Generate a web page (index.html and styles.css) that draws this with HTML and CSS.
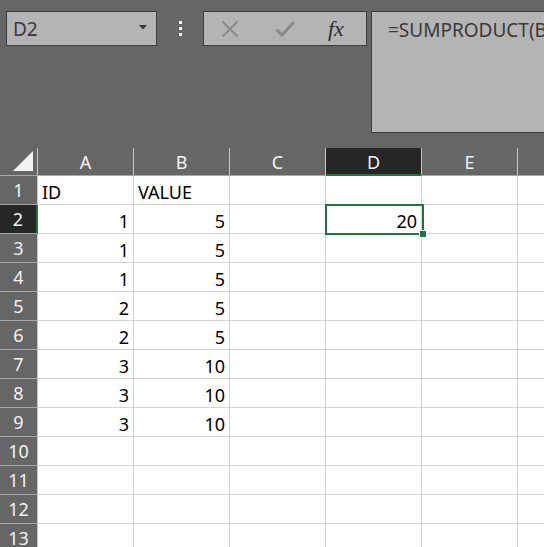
FILE: index.html
```html
<!DOCTYPE html>
<html>
<head>
<meta charset="utf-8">
<link rel="stylesheet" href="styles.css">
</head>
<body>
<div class="app">
  <div class="toolbar">
    <div class="namebox">
      <span class="name">D2</span>
      <svg class="caret" width="8" height="5" viewBox="0 0 8 5"><path d="M0 0H8L4 4.5Z" fill="#3a3a3a"/></svg>
    </div>
    <div class="dots"><i></i><i></i><i></i></div>
    <div class="buttons">
      <svg class="ico" width="18" height="18" viewBox="0 0 18 18"><path d="M1.5 1.5L16.5 16.5M16.5 1.5L1.5 16.5" stroke="#8a8a8a" stroke-width="1.8" fill="none"/></svg>
      <svg class="ico" width="20" height="18" viewBox="0 0 20 18"><path d="M1.5 9.5L7 15L18.5 2.5" stroke="#8a8a8a" stroke-width="3" fill="none"/></svg>
      <span class="fx">fx</span>
    </div>
    <div class="formula">=SUMPRODUCT(B</div>
  </div>
  <div class="sheet">
    <div class="corner"><svg width="22" height="22" viewBox="0 0 22 22"><path d="M21 1V21H1Z" fill="#f2f2f2"/></svg></div>
    <div class="ch">A</div><div class="ch">B</div><div class="ch">C</div><div class="ch sel">D</div><div class="ch">E</div><div class="ch"></div>

    <div class="rh">1</div><div class="c">ID</div><div class="c">VALUE</div><div class="c"></div><div class="c"></div><div class="c"></div><div class="c"></div>
    <div class="rh sel">2</div><div class="c n">1</div><div class="c n">5</div><div class="c"></div><div class="c n">20</div><div class="c"></div><div class="c"></div>
    <div class="rh">3</div><div class="c n">1</div><div class="c n">5</div><div class="c"></div><div class="c"></div><div class="c"></div><div class="c"></div>
    <div class="rh">4</div><div class="c n">1</div><div class="c n">5</div><div class="c"></div><div class="c"></div><div class="c"></div><div class="c"></div>
    <div class="rh">5</div><div class="c n">2</div><div class="c n">5</div><div class="c"></div><div class="c"></div><div class="c"></div><div class="c"></div>
    <div class="rh">6</div><div class="c n">2</div><div class="c n">5</div><div class="c"></div><div class="c"></div><div class="c"></div><div class="c"></div>
    <div class="rh">7</div><div class="c n">3</div><div class="c n">10</div><div class="c"></div><div class="c"></div><div class="c"></div><div class="c"></div>
    <div class="rh">8</div><div class="c n">3</div><div class="c n">10</div><div class="c"></div><div class="c"></div><div class="c"></div><div class="c"></div>
    <div class="rh">9</div><div class="c n">3</div><div class="c n">10</div><div class="c"></div><div class="c"></div><div class="c"></div><div class="c"></div>
    <div class="rh">10</div><div class="c"></div><div class="c"></div><div class="c"></div><div class="c"></div><div class="c"></div><div class="c"></div>
    <div class="rh">11</div><div class="c"></div><div class="c"></div><div class="c"></div><div class="c"></div><div class="c"></div><div class="c"></div>
    <div class="rh">12</div><div class="c"></div><div class="c"></div><div class="c"></div><div class="c"></div><div class="c"></div><div class="c"></div>
    <div class="rh">13</div><div class="c"></div><div class="c"></div><div class="c"></div><div class="c"></div><div class="c"></div><div class="c"></div>
    <div class="selbox"><span class="handle"></span></div>
  </div>
</div>
</body>
</html>
```
FILE: styles.css
```css
html, body {
  margin: 0;
  padding: 0;
  background: #666666;
  overflow: hidden;
}
.app {
  width: 544px;
  height: 547px;
  overflow: hidden;
  font-family: "Noto Sans", "Open Sans", sans-serif;
}
.toolbar {
  height: 148px;
  display: flex;
  align-items: flex-start;
  padding: 11px 0 0 6px;
  box-sizing: border-box;
  background: #666666;
}
.namebox {
  width: 151px;
  height: 35px;
  box-sizing: border-box;
  border: 1px solid #3d3d3d;
  background: #b4b4b4;
  display: flex;
  align-items: center;
  justify-content: space-between;
  padding: 0 9px 0 6px;
}
.name {
  font-size: 19px;
  color: #3a3a3a;
  line-height: 1;
  margin-top: 1px;
}
.caret { margin-top: -2px; }
.dots {
  width: 46px;
  height: 35px;
  display: flex;
  flex-direction: column;
  align-items: center;
  justify-content: center;
  gap: 3px;
}
.dots i {
  display: block;
  width: 3px;
  height: 3px;
  background: #f4f4f4;
}
.buttons {
  width: 164px;
  height: 35px;
  box-sizing: border-box;
  border: 1px solid #3d3d3d;
  background: #b4b4b4;
  display: flex;
  align-items: center;
  padding-left: 17px;
  gap: 36px;
}
.fx {
  font-family: "Liberation Serif", "DejaVu Serif", serif;
  font-style: italic;
  font-size: 22px;
  color: #2e2e2e;
  margin-left: -3px;
  line-height: 1;
}
.formula {
  margin-left: 4px;
  flex: 1;
  height: 122px;
  box-sizing: border-box;
  border: 1px solid #3d3d3d;
  border-right: none;
  background: #b4b4b4;
  font-size: 19px;
  color: #3a3a3a;
  padding: 5px 0 0 16px;
  white-space: nowrap;
  overflow: hidden;
}
.sheet {
  position: relative;
  display: grid;
  grid-template-columns: 38px repeat(6, 96px);
  grid-template-rows: 28px;
  grid-auto-rows: 29px;
  background: #ffffff;
}
.corner {
  background: #666666;
  border-right: 1px solid #c8c8c8;
  border-bottom: 1px solid #a8a8a8;
  box-sizing: border-box;
  display: flex;
  align-items: flex-end;
  justify-content: flex-end;
  padding: 0 3px 3px 0;
}
.ch {
  background: #666666;
  color: #f2f2f2;
  font-size: 18px;
  display: flex;
  align-items: center;
  justify-content: center;
  border-right: 1px solid #c8c8c8;
  border-bottom: 1px solid #a8a8a8;
  box-sizing: border-box;
  padding-top: 1px;
}
.ch.sel {
  background: #262626;
  border-bottom: 2px solid #217346;
}
.rh {
  background: #666666;
  color: #f2f2f2;
  font-size: 18px;
  display: flex;
  align-items: center;
  justify-content: center;
  border-bottom: 1px solid #a8a8a8;
  border-right: 1px solid #c8c8c8;
  box-sizing: border-box;
}
.rh.sel {
  background: #262626;
  border-right: 2px solid #217346;
}
.c {
  border-right: 1px solid #d4d4d4;
  border-bottom: 1px solid #d4d4d4;
  box-sizing: border-box;
  font-size: 18px;
  color: #000000;
  display: flex;
  align-items: center;
  padding: 3px 4px 0 4px;
  white-space: nowrap;
}
.c.n { justify-content: flex-end; }
.selbox {
  position: absolute;
  left: 325px;
  top: 56px;
  width: 99px;
  height: 31px;
  box-sizing: border-box;
  border: 2px solid #217346;
  pointer-events: none;
}
.handle {
  position: absolute;
  right: -5px;
  bottom: -5px;
  width: 6px;
  height: 6px;
  background: #217346;
  border: 1px solid #ffffff;
}
```
